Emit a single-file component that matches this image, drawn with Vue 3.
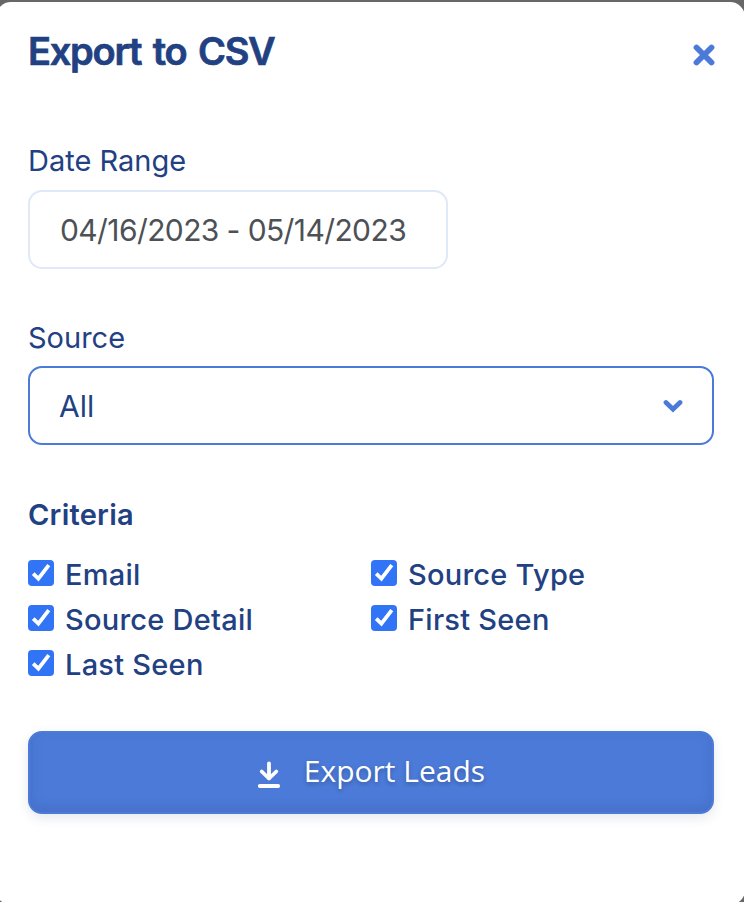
<template>
    <div class="export-modal">
        <header class="modal-header">
            <h2 class="modal-title">Export to CSV</h2>
            <button type="button" class="close-button" aria-label="Close">
                <svg width="22" height="22" viewBox="0 0 22 22" fill="none">
                    <path d="M3.5 3.5 L18.5 18.5 M18.5 3.5 L3.5 18.5" stroke="currentColor" stroke-width="5.8" stroke-linecap="round" />
                </svg>
            </button>
        </header>

        <div class="field-label">Date Range</div>
        <div class="date-input"><span>{{ dateRange }}</span></div>

        <div class="field-label source-label">Source</div>
        <div class="source-select">
            <span>{{ source }}</span>
            <svg width="20" height="14" viewBox="0 0 20 14" fill="none">
                <path d="M3 3.5 L10 10.2 L17 3.5" stroke="currentColor" stroke-width="4.8" stroke-linecap="round" />
            </svg>
        </div>

        <div class="criteria-title">Criteria</div>
        <div class="criteria-list">
            <label v-for="item in criteria" :key="item.label" class="criteria-item">
                <input type="checkbox" v-model="item.checked" class="criteria-input">
                <span class="criteria-box">
                    <svg v-if="item.checked" width="26" height="26" viewBox="0 0 26 26" fill="none">
                        <path d="M5.2 13.6 L10.4 18.6 L20.8 5.2" stroke="#fff" stroke-width="3.8" />
                    </svg>
                </span>
                <span>{{ item.label }}</span>
            </label>
        </div>

        <button type="button" class="export-button">
            <svg width="24" height="28" viewBox="0 0 24 28" fill="none" stroke="currentColor" stroke-linecap="round">
                <path d="M12 3.5 V18" stroke-width="3.8" />
                <path d="M4.7 11.5 L12 18.5 L19.3 11.5" stroke-width="3.8" stroke-linejoin="round" />
                <path d="M2.8 26 H21.2" stroke-width="3.8" />
            </svg>
            <span class="export-text">Export Leads</span>
        </button>
    </div>
</template>

<script setup>
    import { ref } from 'vue'

    const dateRange = ref('04/16/2023 - 05/14/2023')
    const source = ref('All')

    const criteria = ref([
        { label: 'Email', checked: true },
        { label: 'Source Type', checked: true },
        { label: 'Source Detail', checked: true },
        { label: 'First Seen', checked: true },
        { label: 'Last Seen', checked: true },
    ])
</script>

<style>
    body {
        margin: 0;
        overflow: hidden;
        background: #676767;
    }
</style>

<style scoped>
    .export-modal {
        box-sizing: border-box;
        width: 749px;
        height: 903px;
        margin: 2px 0 0 -4px;
        padding: 25px 31px 0 32px;
        border-radius: 15px;
        background: #fff;
        font-family: Inter, "Liberation Sans", sans-serif;
        color: #224182;
    }

    .modal-header {
        display: flex;
        justify-content: space-between;
        height: 117px;
    }

    .modal-title {
        margin: 0;
        font-size: 38px;
        line-height: 48px;
        font-weight: 600;
        letter-spacing: -1.25px;
        word-spacing: 3.2px;
        -webkit-text-stroke: 0.7px currentColor;
    }

    .close-button {
        width: 22px;
        height: 22px;
        margin: 17px -1px 0 0;
        padding: 0;
        border: none;
        background: none;
        color: #4b7ad8;
    }

    .close-button svg,
    .criteria-box svg {
        display: block;
    }

    .field-label {
        height: 46px;
        font-size: 29px;
        line-height: 34px;
    }

    .source-label {
        height: 45px;
        margin-top: 52px;
    }

    .date-input,
    .source-select {
        box-sizing: border-box;
        display: flex;
        align-items: center;
        height: 79px;
        padding: 0 30px;
        border: 2px solid #e0e9f8;
        border-radius: 14px;
        font-size: 30px;
        white-space: nowrap;
    }

    .date-input {
        width: 420px;
        color: #4d5156;
        letter-spacing: -0.6px;
    }

    .source-select {
        justify-content: space-between;
        padding: 0 29px;
        border-color: #4b7ad8;
    }

    .source-select svg {
        color: #4b7ad8;
    }

    .criteria-title {
        margin-top: 52px;
        font-size: 29px;
        line-height: 36px;
        font-weight: 600;
        letter-spacing: 0.25px;
    }

    .criteria-list {
        display: grid;
        grid-template-columns: 1fr 1fr;
        grid-auto-rows: 45px;
        margin-top: 19px;
    }

    .criteria-item {
        display: flex;
        align-items: center;
        font-size: 29px;
        font-weight: 500;
        letter-spacing: 0.25px;
    }

    .criteria-input {
        position: absolute;
        opacity: 0;
        pointer-events: none;
    }

    .criteria-box {
        width: 26px;
        height: 26px;
        margin: -3px 11px 0 0;
        border-radius: 4px;
        background: #3174f6;
    }

    .export-button {
        display: flex;
        align-items: center;
        justify-content: center;
        gap: 23px;
        box-sizing: border-box;
        width: 100%;
        height: 83px;
        margin-top: 44px;
        padding: 0 0 3px;
        border: 2px solid #4b7ad8;
        border-radius: 14px;
        background: #4b7ad8;
        box-shadow: 0 4px 12px rgba(34, 65, 130, 0.12), inset 0 -4px 12px rgba(50, 70, 130, 0.2);
        color: #fff;
        font-family: "Open Sans", "Noto Sans", sans-serif;
        font-size: 30px;
        text-shadow: 0 2px 4px rgba(0, 0, 0, 0.25);
    }

    .export-button svg {
        margin-top: 5px;
    }

    .export-text {
        margin-bottom: 2px;
    }
</style>
